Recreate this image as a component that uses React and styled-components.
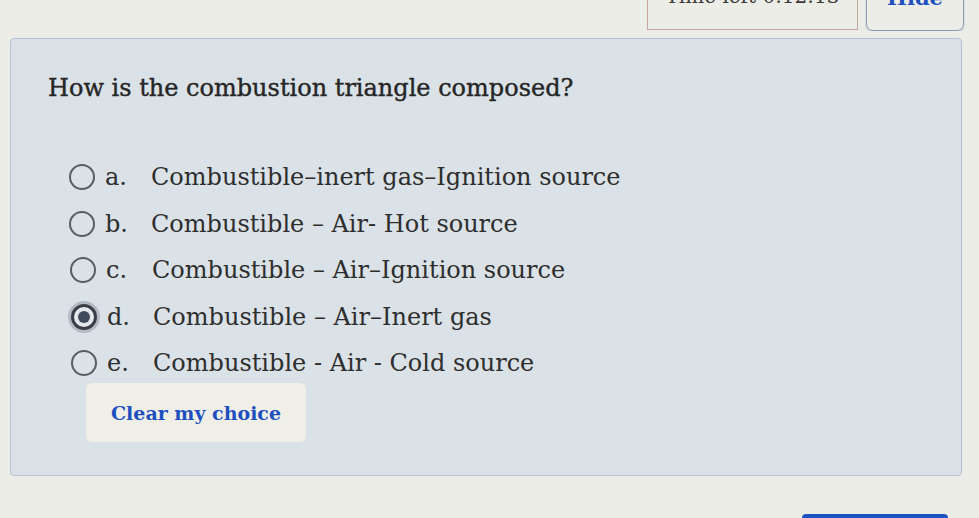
import React from "react";
import styled, { createGlobalStyle } from "styled-components";

const Global = createGlobalStyle`
  html, body { margin: 0; padding: 0; }
  body {
    background: #ecede6;
    width: 979px;
    height: 518px;
    overflow: hidden;
    font-family: "DejaVu Serif", "Liberation Serif", serif;
  }
`;

const Page = styled.div`
  display: flex;
  flex-direction: column;
  width: 979px;
  height: 518px;
  overflow: hidden;
`;

const TopBar = styled.div`
  height: 31px;
  flex: none;
  display: flex;
  justify-content: flex-end;
  align-items: flex-end;
  gap: 8px;
  padding-right: 15px;
  overflow: hidden;
`;

const TimeBox = styled.div`
  width: 211px;
  height: 48px;
  box-sizing: border-box;
  border: 1px solid #c6a49c;
  border-top: none;
  display: flex;
  align-items: flex-end;
  justify-content: center;
  padding-bottom: 21px;
  font-size: 20px;
  color: #3a3a3a;
  margin-bottom: 1px;
`;

const HideButton = styled.div`
  width: 98px;
  height: 48px;
  box-sizing: border-box;
  border: 1.5px solid #8c9bb5;
  border-radius: 0 0 7px 7px;
  display: flex;
  align-items: flex-end;
  justify-content: center;
  padding-bottom: 20px;
  font-size: 21px;
  font-weight: bold;
  color: #1f4fbf;
  box-shadow: 0 1px 2px rgba(80, 100, 140, 0.35);
`;

const Card = styled.div`
  flex: none;
  margin: 7px 0 0 10px;
  width: 952px;
  height: 438px;
  box-sizing: border-box;
  background: #dbe2e7;
  border: 1px solid #b5c2cf;
  border-radius: 4px;
  padding: 35px 0 0 37px;
  display: flex;
  flex-direction: column;
`;

const Question = styled.div`
  font-size: 24px;
  font-weight: normal;
  color: #262626;
  -webkit-text-stroke: 0.4px #262626;
`;

const Options = styled.div`
  margin-top: 59px;
  display: flex;
  flex-direction: column;
  gap: 14.5px;
`;

const Option = styled.label`
  display: flex;
  align-items: center;
  height: 32px;
  padding-left: ${(p) => p.$indent}px;
  font-size: 24px;
  color: #2e2e2e;
`;

const Radio = styled.span`
  width: 26px;
  height: 26px;
  box-sizing: border-box;
  border-radius: 50%;
  border: ${(p) => (p.$checked ? "3px solid #3a3f47" : "2.5px solid #5a5d62")};
  background: ${(p) => (p.$checked ? "#e4e8ec" : "transparent")};
  display: flex;
  align-items: center;
  justify-content: center;
  box-shadow: ${(p) => (p.$checked ? "0 0 0 3px rgba(150,160,175,0.6)" : "none")};
  flex: none;
  &::after {
    content: "";
    display: ${(p) => (p.$checked ? "block" : "none")};
    width: 12px;
    height: 12px;
    border-radius: 50%;
    background: #3f4a5a;
  }
`;

const Letter = styled.span`
  width: 46px;
  margin-left: 10px;
  flex: none;
`;

const ClearButton = styled.div`
  margin: 4px 0 0 38px;
  width: 220px;
  height: 59px;
  box-sizing: border-box;
  background: #efefe7;
  border-radius: 6px;
  display: flex;
  align-items: center;
  justify-content: center;
  font-size: 19px;
  font-weight: bold;
  color: #1d4fbf;
`;

const BottomBar = styled.div`
  flex: none;
  margin-top: 38px;
  display: flex;
  justify-content: flex-end;
  padding-right: 31px;
`;

const NextButton = styled.div`
  width: 146px;
  height: 30px;
  background: #1b55c4;
  border-radius: 4px 4px 0 0;
`;

const options = [
  { l: "a.", t: "Combustible\u2013inert gas\u2013Ignition source", indent: 21 },
  { l: "b.", t: "Combustible \u2013 Air- Hot source", indent: 21 },
  { l: "c.", t: "Combustible \u2013 Air\u2013Ignition source", indent: 22 },
  { l: "d.", t: "Combustible \u2013 Air\u2013Inert gas", indent: 23, checked: true },
  { l: "e.", t: "Combustible - Air - Cold source", indent: 23 },
];

export default function App() {
  return (
    <>
      <Global />
      <Page>
        <TopBar>
          <TimeBox>Time left 0:12:13</TimeBox>
          <HideButton>Hide</HideButton>
        </TopBar>
        <Card>
          <Question>How is the combustion triangle composed?</Question>
          <Options>
            {options.map((o) => (
              <Option key={o.l} $indent={o.indent}>
                <Radio $checked={!!o.checked} />
                <Letter>{o.l}</Letter>
                <span>{o.t}</span>
              </Option>
            ))}
          </Options>
          <ClearButton>Clear my choice</ClearButton>
        </Card>
        <BottomBar>
          <NextButton />
        </BottomBar>
      </Page>
    </>
  );
}
